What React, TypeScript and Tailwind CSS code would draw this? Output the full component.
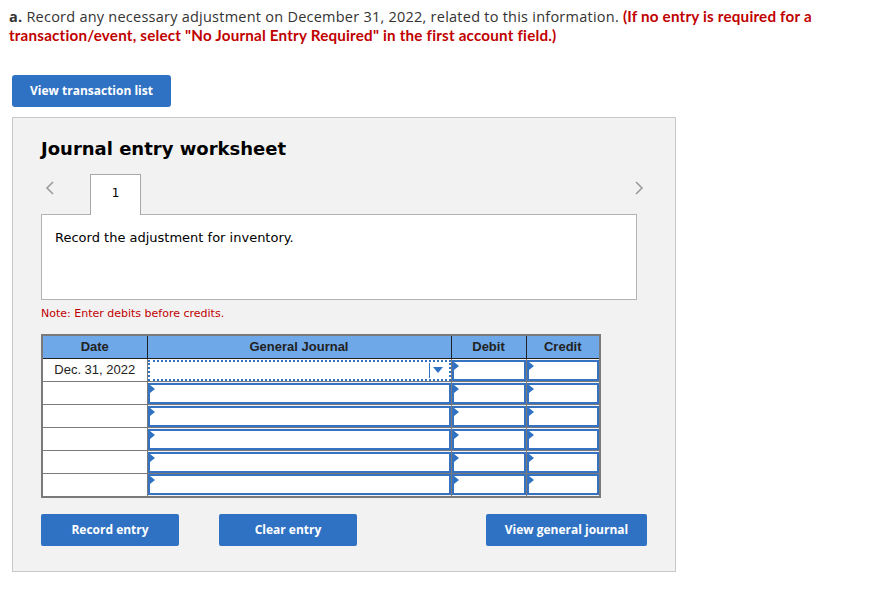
import React from "react";

const rows = [0, 1, 2, 3, 4, 5];

function Marker() {
  return (
    <svg className="absolute left-0 top-0" width="5" height="8" viewBox="0 0 5 8" aria-hidden="true">
      <path d="M0 0 L5 4 L0 8 Z" fill="#2f72c3" />
    </svg>
  );
}

function InputCell() {
  return (
    <td className="h-[23px] border border-[#7a7a7a] p-0">
      <div className="relative h-[21px] border-2 border-[#3573c2] bg-white">
        <Marker />
      </div>
    </td>
  );
}

export default function App() {
  return (
    <div className="min-h-[593px] bg-white pt-[7px] text-[#333]">
      <p className="px-[9px] text-[14.5px] leading-[19px] font-['Open_Sans',sans-serif] tracking-[0.24px]">
        <b>a.</b> Record any necessary adjustment on December 31, 2022, related to this information.{" "}
        <b className="text-[15.2px] tracking-[0.2px] text-[#c00000] font-['Lato',sans-serif]">
          (If no entry is required for a transaction/event, select "No Journal Entry Required" in the first account field.)
        </b>
      </p>

      <button className="ml-[12px] mt-[30px] h-[32px] w-[159px] rounded-[3px] bg-[#2f72c3] text-[12px] font-bold text-white font-['Open_Sans',sans-serif]">
        View transaction list
      </button>

      <section className="ml-[12px] mt-[10px] h-[455px] w-[664px] border border-[#c8c8c8] bg-[#f2f2f2] px-[28px] pt-[19px] font-['DejaVu_Sans',sans-serif]">
        <h1 className="text-[18px] font-bold leading-[24px] text-black">Journal entry worksheet</h1>

        <div className="mt-[13px] flex items-end">
          <div className="flex h-[40px] w-[49px] items-start pt-[6px] pl-[4px]">
            <svg width="10" height="16" viewBox="0 0 10 16" aria-hidden="true">
              <path d="M8 2 L2 8 L8 14" stroke="#9b9b9b" strokeWidth="1.6" fill="none" />
            </svg>
          </div>
          <div className="relative z-10 -mb-px flex h-[41px] w-[51px] justify-center border border-b-0 border-[#a8a8a8] bg-white pt-[9px] text-[12px] text-black">
            1
          </div>
          <div className="flex flex-1 justify-end pb-[18px] pr-[3px]">
            <svg width="10" height="16" viewBox="0 0 10 16" aria-hidden="true">
              <path d="M2 2 L8 8 L2 14" stroke="#9b9b9b" strokeWidth="1.6" fill="none" />
            </svg>
          </div>
        </div>
        <div className="h-[86px] w-[596px] border border-[#b3b3b3] bg-white px-[13px] pt-[13px] text-[13px] text-black">
          Record the adjustment for inventory.
        </div>

        <p className="mt-[6px] text-[11px] text-[#c00000]">Note: Enter debits before credits.</p>

        <table className="mt-[11px] w-[560px] border-collapse border-2 border-[#7a7a7a] font-['Liberation_Sans',sans-serif] text-[13px]">
          <thead>
            <tr className="h-[24px] bg-[#6fa8e8] font-bold text-[#222]">
              <th className="w-[105px] border-r border-b border-[#222]">Date</th>
              <th className="w-[304px] border-r border-b border-[#222]">General Journal</th>
              <th className="w-[75px] border-r border-b border-[#222]">Debit</th>
              <th className="border-b border-[#222]">Credit</th>
            </tr>
          </thead>
          <tbody>
            {rows.map((r) => (
              <tr key={r} className="h-[23px]">
                <td className="h-[23px] border border-[#7a7a7a] bg-white p-0 text-center text-[#222]">
                  {r === 0 ? "Dec. 31, 2022" : ""}
                </td>
                {r === 0 ? (
                  <td className="h-[23px] border border-[#7a7a7a] p-0">
                    <div className="relative flex h-[21px] items-center justify-end border-2 border-dotted border-[#2f72c3] bg-white">
                      <div className="mr-[3px] h-[15px] w-px bg-[#2f72c3]" />
                      <svg className="mr-[6px]" width="10" height="6" viewBox="0 0 10 6" aria-hidden="true">
                        <path d="M0 0 L10 0 L5 6 Z" fill="#2f72c3" />
                      </svg>
                    </div>
                  </td>
                ) : (
                  <InputCell />
                )}
                <InputCell />
                <InputCell />
              </tr>
            ))}
          </tbody>
        </table>

        <div className="mt-[16px] flex font-['Open_Sans',sans-serif] text-[12px] font-bold text-white">
          <button className="h-[32px] w-[138px] rounded-[2px] bg-[#2f72c3]">Record entry</button>
          <button className="ml-[40px] h-[32px] w-[138px] rounded-[2px] bg-[#2f72c3]">Clear entry</button>
          <button className="ml-[129px] h-[32px] w-[161px] rounded-[2px] bg-[#2f72c3]">View general journal</button>
        </div>
      </section>
    </div>
  );
}
